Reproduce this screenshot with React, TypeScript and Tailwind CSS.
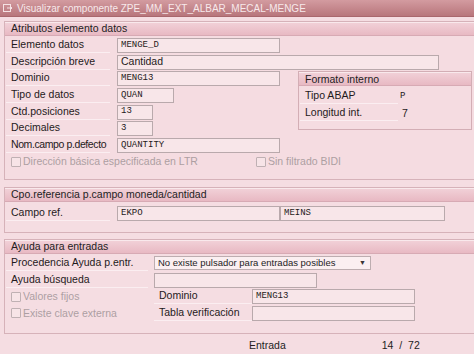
import React from 'react';

const sans = { fontFamily: '"Liberation Sans", Arial, sans-serif' };

function Label({ children, w = 'w-[104px]', tight = false }: { children: React.ReactNode; w?: string; tight?: boolean }) {
  return (
    <div className={`${w} h-[15px] flex items-center pl-[5px] border-b border-[#fbeef1] text-[10.5px] text-[#1f1a1b] whitespace-nowrap ${tight ? 'tracking-[-0.4px]' : ''}`}>
      {children}
    </div>
  );
}

function Field({ value, w, mono = true }: { value?: string; w: string; mono?: boolean }) {
  return (
    <div
      className={`${w} h-[15px] border border-[#b9a9ac] bg-[#f8e6e9] flex items-center pl-[3px] text-[#1f1a1b] whitespace-nowrap overflow-hidden ${mono ? 'font-["Liberation_Mono",monospace] text-[9px]' : 'text-[10.5px]'}`}
    >
      {value}
    </div>
  );
}

function Check({ label }: { label: string }) {
  return (
    <div className="flex items-center text-[10.5px] text-[#ad9fa2] whitespace-nowrap">
      <span className="w-[10px] h-[10px] border border-[#bfb0b3] bg-[#f7e4e7] rounded-[1px] mr-[2px]" />
      {label}
    </div>
  );
}

function Header({ title }: { title: string }) {
  return (
    <div className="h-[14px] flex items-center pl-[6px] border-t border-[#f9e9ec] border-b border-b-[#d7aab4] bg-gradient-to-b from-[#f1d0d7] to-[#e8b9c3] text-[10.5px] text-[#231d1e]">
      {title}
    </div>
  );
}

function Row({ children, h = 'h-[16.7px]' }: { children: React.ReactNode; h?: string }) {
  return <div className={`${h} flex items-center`}>{children}</div>;
}

export default function App() {
  return (
    <div className="w-[474px] h-[354px] overflow-hidden bg-[#f5dde2] flex flex-col" style={sans}>
      {/* title bar */}
      <div className="h-[17px] flex items-center pl-[3px] bg-gradient-to-b from-[#d39ba0] to-[#b8767c] text-[10px] text-[#f7e9eb] border-b border-[#a9676d]">
        <svg width="10" height="10" viewBox="0 0 10 10" className="mr-[4px]">
          <rect x="0.5" y="1.5" width="7" height="7" fill="none" stroke="#f4e2e4" strokeWidth="1" />
          <path d="M4 5 H9 M7 3 L9 5 L7 7" fill="none" stroke="#f4e2e4" strokeWidth="1" />
        </svg>
        Visualizar componente ZPE_MM_EXT_ALBAR_MECAL-MENGE
      </div>

      <div className="flex-1 pl-[4px] pt-[4px] flex flex-col">
        {/* group 1 */}
        <div className="h-[159px] border-l border-t border-b border-[#d6b2b9] bg-[#f5dce1] flex flex-col">
          <Header title="Atributos elemento datos" />
          <div className="pl-[1px] pt-[1px]">
            <Row>
              <Label>Elemento datos</Label>
              <div className="w-[7px]" />
              <Field value="MENGE_D" w="w-[163px]" />
            </Row>
            <Row>
              <Label>Descripción breve</Label>
              <div className="w-[7px]" />
              <Field value="Cantidad" w="w-[322px]" mono={false} />
            </Row>
            <div className="flex">
              <div className="w-[292px]">
                <Row>
                  <Label>Dominio</Label>
                  <div className="w-[7px]" />
                  <Field value="MENG13" w="w-[163px]" />
                </Row>
                <Row>
                  <Label>Tipo de datos</Label>
                  <div className="w-[7px]" />
                  <Field value="QUAN" w="w-[57px]" />
                </Row>
                <Row>
                  <Label>Ctd.posiciones</Label>
                  <div className="w-[7px]" />
                  <Field value="13" w="w-[36px]" />
                </Row>
                <Row>
                  <Label>Decimales</Label>
                  <div className="w-[7px]" />
                  <Field value="3" w="w-[36px]" />
                </Row>
                <Row>
                  <Label tight>Nom.campo p.defecto</Label>
                  <div className="w-[7px]" />
                  <Field value="QUANTITY" w="w-[163px]" />
                </Row>
              </div>
              <div className="mt-[1px] w-[174px] h-[59px] border border-[#d3aeb5] flex flex-col">
                <Header title="Formato interno" />
                <div className="pl-[1px] pt-[2px]">
                  <Row>
                    <Label w="w-[98px]">Tipo ABAP</Label>
                    <span className="ml-[2px] text-[9px] font-['Liberation_Mono',monospace] text-[#1f1a1b]">P</span>
                  </Row>
                  <Row>
                    <Label w="w-[98px]">Longitud int.</Label>
                    <span className="ml-[4px] text-[10.5px] text-[#1f1a1b]">7</span>
                  </Row>
                </div>
              </div>
            </div>
            <Row h="h-[17px]">
              <div className="w-[250px] pl-[5px]">
                <Check label="Dirección básica especificada en LTR" />
              </div>
              <Check label="Sin filtrado BIDI" />
            </Row>
          </div>
        </div>

        {/* group 2 */}
        <div className="mt-[7px] h-[46px] border-l border-t border-b border-[#d6b2b9] flex flex-col">
          <Header title="Cpo.referencia p.campo moneda/cantidad" />
          <div className="pl-[1px] pt-[3px]">
            <Row>
              <Label>Campo ref.</Label>
              <div className="w-[7px]" />
              <Field value="EKPO" w="w-[163px]" />
              <Field value="MEINS" w="w-[165px]" />
            </Row>
          </div>
        </div>

        {/* group 3 */}
        <div className="mt-[6px] h-[95px] border-l border-t border-b border-[#d6b2b9] flex flex-col">
          <Header title="Ayuda para entradas" />
          <div className="pl-[1px] pt-[1px]">
            <Row>
              <Label w="w-[142px]">Procedencia Ayuda p.entr.</Label>
              <div className="w-[6px]" />
              <div className="w-[217px] h-[14px] border border-[#bdadb0] bg-[#fbeff1] flex items-center pl-[3px] text-[9.5px] text-[#231d1e] whitespace-nowrap">
                <span className="flex-1">No existe pulsador para entradas posibles</span>
                <span className="text-[7px] mr-[4px] text-[#3a3334]">▼</span>
              </div>
            </Row>
            <Row>
              <Label w="w-[142px]">Ayuda búsqueda</Label>
              <div className="w-[6px]" />
              <Field w="w-[163px]" />
            </Row>
            <Row>
              <div className="w-[148px] pl-[5px]">
                <Check label="Valores fijos" />
              </div>
              <Label w="w-[98px]">Dominio</Label>
              <Field value="MENG13" w="w-[163px]" />
            </Row>
            <Row>
              <div className="w-[148px] pl-[5px]">
                <Check label="Existe clave externa" />
              </div>
              <Label w="w-[98px]">Tabla verificación</Label>
              <Field w="w-[163px]" />
            </Row>
          </div>
        </div>

        {/* status */}
        <div className="flex-1 flex items-center pt-[3px] text-[10.5px] text-[#231d1e]">
          <span className="ml-[245px]">Entrada</span>
          <span className="ml-[96px]">14&nbsp;&nbsp;/&nbsp;&nbsp;72</span>
        </div>
      </div>
    </div>
  );
}
